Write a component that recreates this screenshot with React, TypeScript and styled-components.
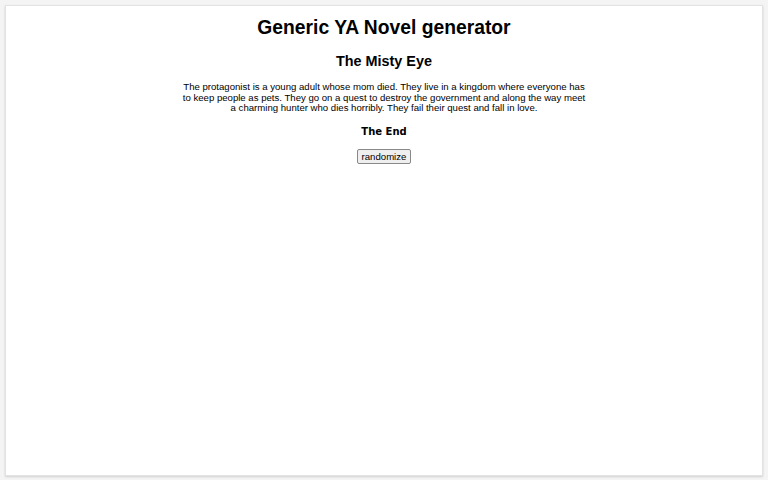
import styled, { createGlobalStyle } from "styled-components";

const GlobalStyle = createGlobalStyle`
  html, body {
    margin: 0;
    padding: 0;
    background: #f4f4f4;
  }
`;

const Card = styled.main`
  box-sizing: border-box;
  margin: 5px;
  height: 471px;
  background: #fff;
  border: 1px solid #e2e2e2;
  box-shadow: 0 1px 2px rgba(0, 0, 0, 0.15);
  font-family: "Liberation Sans", Arial, sans-serif;
  color: #000;
  text-align: center;
  padding-top: 11px;
`;

const Title = styled.h1`
  margin: 0;
  font-size: 19.3px;
  line-height: 22px;
  font-weight: bold;
`;

const BookTitle = styled.h2`
  margin: 14px 0 0;
  font-size: 14.4px;
  line-height: 17px;
  font-weight: bold;
`;

const Plot = styled.p`
  margin: 12px auto 0;
  max-width: 406px;
  font-size: 9.6px;
  line-height: 10.6px;
`;

const Ending = styled.h3`
  margin: 11px 0 0;
  font-family: "DejaVu Sans", sans-serif;
  font-size: 10px;
  line-height: 13px;
  font-weight: bold;
`;

const Randomize = styled.button`
  margin-top: 11px;
  font-family: "Liberation Sans", Arial, sans-serif;
  font-size: 9.6px;
  line-height: 11px;
  padding: 1px 4px;
  border: 1px solid #888;
  border-radius: 2px;
  background: #efefef;
  color: #000;
`;

export default function App() {
  return (
    <>
      <GlobalStyle />
      <Card>
        <Title>Generic YA Novel generator</Title>
        <BookTitle>The Misty Eye</BookTitle>
        <Plot>
          The protagonist is a young adult whose mom died. They live in a
          kingdom where everyone has to keep people as pets. They go on a quest
          to destroy the government and along the way meet a charming hunter
          who dies horribly. They fail their quest and fall in love.
        </Plot>
        <Ending>The End</Ending>
        <Randomize>randomize</Randomize>
      </Card>
    </>
  );
}
